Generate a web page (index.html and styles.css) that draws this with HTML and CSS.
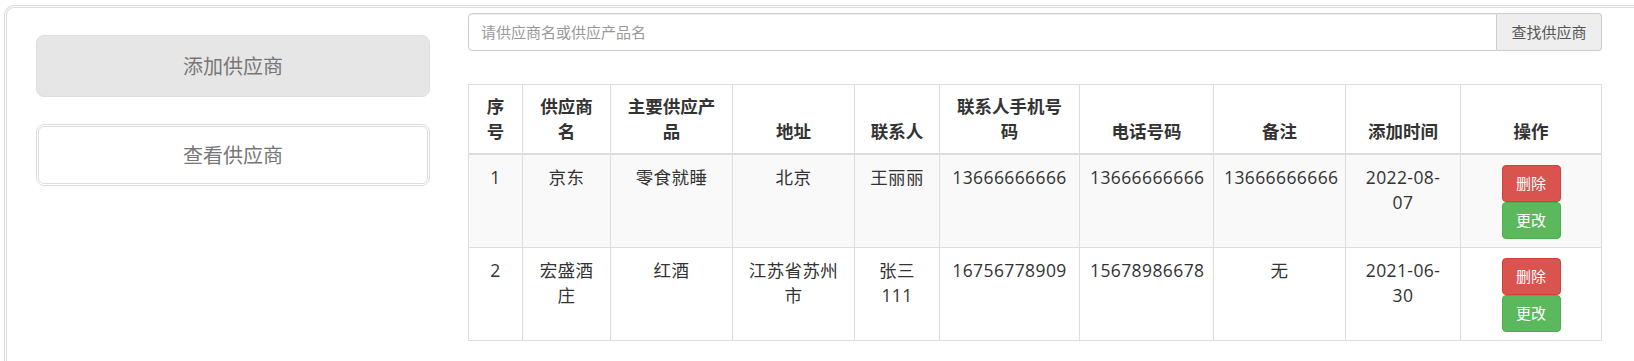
FILE: index.html
```html
<!DOCTYPE html>
<html>
<head>
  <meta charset="UTF-8">
  <title>供应商管理</title>
  <link rel="stylesheet" href="styles.css">
</head>
<body>
  <div class="page">
    <div class="sidebar">
      <a class="side-btn active">添加供应商</a>
      <a class="side-btn outline">查看供应商</a>
    </div>
    <div class="content">
      <div class="search">
        <input class="search-input" type="text" placeholder="请供应商名或供应产品名">
        <span class="search-btn">查找供应商</span>
      </div>
      <table class="suppliers">
        <colgroup>
          <col class="c-no">
          <col class="c-name">
          <col class="c-product">
          <col class="c-addr">
          <col class="c-contact">
          <col class="c-mobile">
          <col class="c-phone">
          <col class="c-note">
          <col class="c-date">
          <col class="c-ops">
        </colgroup>
        <thead>
          <tr>
            <th>序号</th>
            <th>供应商名</th>
            <th>主要供应产品</th>
            <th>地址</th>
            <th>联系人</th>
            <th>联系人手机号码</th>
            <th>电话号码</th>
            <th>备注</th>
            <th>添加时间</th>
            <th>操作</th>
          </tr>
        </thead>
        <tbody>
          <tr>
            <td>1</td>
            <td>京东</td>
            <td>零食就睡</td>
            <td>北京</td>
            <td>王丽丽</td>
            <td>13666666666</td>
            <td>13666666666</td>
            <td>13666666666</td>
            <td class="date">2022-08-07</td>
            <td>
              <div class="ops">
                <button class="btn btn-danger">删除</button>
                <button class="btn btn-success">更改</button>
              </div>
            </td>
          </tr>
          <tr>
            <td>2</td>
            <td>宏盛酒庄</td>
            <td>红酒</td>
            <td>江苏省苏州市</td>
            <td>张三111</td>
            <td>16756778909</td>
            <td>15678986678</td>
            <td>无</td>
            <td class="date">2021-06-30</td>
            <td>
              <div class="ops">
                <button class="btn btn-danger">删除</button>
                <button class="btn btn-success">更改</button>
              </div>
            </td>
          </tr>
        </tbody>
      </table>
    </div>
  </div>
</body>
</html>
```

FILE: styles.css
```css
body { margin: 0; font-family: "Open Sans", "Noto Sans CJK SC", sans-serif; font-size: 17.5px; line-height: 25px; color: #333; overflow: hidden; background: #fff; }
.page { display: flex; box-sizing: border-box; height: calc(100vh - 5px); margin: 5px 0 0 4px; border: 3px double #ddd; border-right: 0; border-bottom: 0; border-top-left-radius: 10px; }

.sidebar { width: 394px; padding: 27px 0 0 29px; display: flex; flex-direction: column; gap: 27px; flex-shrink: 0; }
.side-btn { height: 62px; box-sizing: border-box; display: flex; align-items: center; justify-content: center; font-size: 20px; color: #777; border-radius: 8px; cursor: pointer; }
.side-btn.active { background: #e6e6e6; border: 1px solid #dedede; }
.side-btn.outline { background: #fff; border: 3px double #ddd; }

.content { width: 1134px; margin-left: 38px; padding-top: 5px; flex-shrink: 0; }
.search { display: flex; height: 38px; }
.search-input { flex: 1; box-sizing: border-box; height: 38px; margin: 0; padding: 0 12px; border: 1px solid #ccc; border-radius: 4px 0 0 4px; font-family: inherit; font-size: 15px; color: #555; box-shadow: inset 0 1px 1px rgba(0,0,0,.075); outline: none; }
.search-input::placeholder { color: #999; }
.search-btn { width: 105px; box-sizing: border-box; display: flex; align-items: center; justify-content: center; background: #eee; border: 1px solid #ccc; border-left: 0; border-radius: 0 4px 4px 0; color: #555; font-size: 15px; }

.suppliers { width: 1134px; margin-top: 33px; border-collapse: collapse; table-layout: fixed; border: 1px solid #ddd; }
.suppliers th, .suppliers td { border: 1px solid #ddd; text-align: center; }
.suppliers th { padding: 9px 10px; vertical-align: bottom; font-weight: bold; border-bottom-width: 2px; }
.suppliers td { padding: 10px 10px 8px; vertical-align: top; letter-spacing: 0.4px; }
.suppliers td.date { padding-left: 14px; padding-right: 14px; }
.suppliers tbody tr:nth-child(odd) { background: #f9f9f9; }

.c-no { width: 54px; }
.c-name { width: 88px; }
.c-product { width: 122px; }
.c-addr { width: 122px; }
.c-contact { width: 85px; }
.c-mobile { width: 140px; }
.c-phone { width: 134px; }
.c-note { width: 132px; }
.c-date { width: 115px; }
.c-ops { width: 141px; }

.ops { display: flex; flex-direction: column; align-items: center; }
.btn { width: 59px; height: 37px; box-sizing: border-box; padding: 0; border: 1px solid transparent; border-radius: 4px; font-family: inherit; font-size: 15px; line-height: 35px; letter-spacing: 0; color: #fff; cursor: pointer; }
.btn-danger { background: #d9534f; border-color: #d43f3a; }
.btn-success { background: #5cb85c; border-color: #4cae4c; }
```
